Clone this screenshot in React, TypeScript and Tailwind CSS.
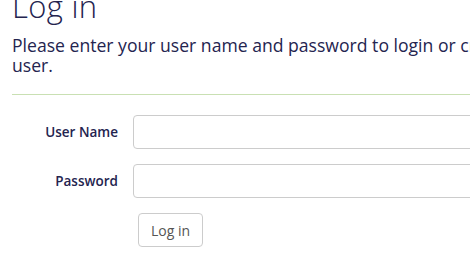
export default function App() {
  return (
    <div
      className="w-[470px] h-[261px] overflow-hidden bg-white text-[#24244f]"
      style={{ fontFamily: '"Open Sans", "Liberation Sans", sans-serif' }}
    >
      <div className="w-[640px] pl-3 -mt-[14px]">
        <h1 className="text-[31px] font-light leading-[40px] tracking-[0.3px]">Log in</h1>
        <p className="text-[17.6px] leading-[20px] mt-[9px]">
          Please enter your user name and password to login or create a new
          <br />
          user.
        </p>
        <hr className="mt-[19px] border-0 border-t border-[#c9e0b3]" />

        <form className="mt-[20px] flex flex-col gap-[15px]">
          <div className="flex items-center">
            <label className="w-[106px] text-right text-[13.5px] font-semibold">User Name</label>
            <input
              type="text"
              className="ml-[15px] w-[500px] h-[34px] rounded-[4px] border border-[#cccccc] px-3 outline-none"
            />
          </div>
          <div className="flex items-center">
            <label className="w-[106px] text-right text-[13.5px] font-semibold">Password</label>
            <input
              type="password"
              className="ml-[15px] w-[500px] h-[34px] rounded-[4px] border border-[#cccccc] px-3 outline-none"
            />
          </div>
          <div className="pl-[126px]">
            <button
              type="button"
              className="h-[34px] px-3 rounded-[4px] border border-[#cccccc] bg-white text-[14px] text-[#555555]"
            >
              Log in
            </button>
          </div>
        </form>
      </div>
    </div>
  );
}
